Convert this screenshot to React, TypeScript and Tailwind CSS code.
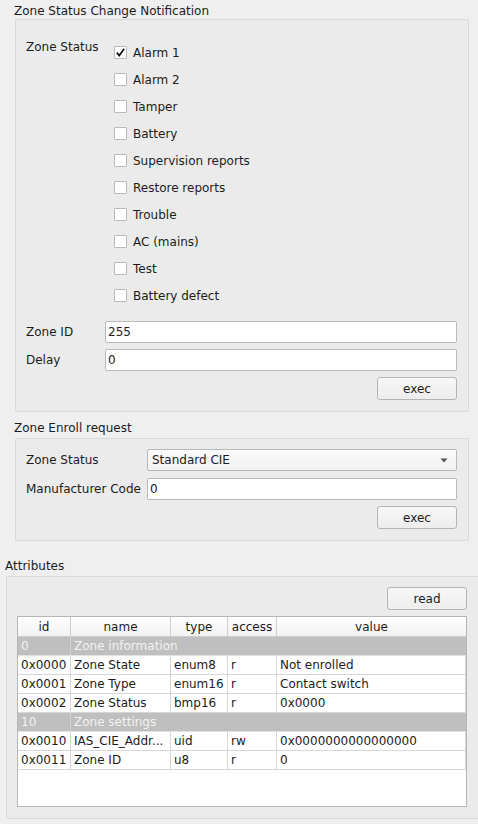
import React from 'react';

const zoneBits = [
  { label: 'Alarm 1', checked: true },
  { label: 'Alarm 2', checked: false },
  { label: 'Tamper', checked: false },
  { label: 'Battery', checked: false },
  { label: 'Supervision reports', checked: false },
  { label: 'Restore reports', checked: false },
  { label: 'Trouble', checked: false },
  { label: 'AC (mains)', checked: false },
  { label: 'Test', checked: false },
  { label: 'Battery defect', checked: false },
];

type Row =
  | { group: true; id: string; title: string }
  | { group?: false; id: string; name: string; type: string; access: string; value: string };

const rows: Row[] = [
  { group: true, id: '0', title: 'Zone information' },
  { id: '0x0000', name: 'Zone State', type: 'enum8', access: 'r', value: 'Not enrolled' },
  { id: '0x0001', name: 'Zone Type', type: 'enum16', access: 'r', value: 'Contact switch' },
  { id: '0x0002', name: 'Zone Status', type: 'bmp16', access: 'r', value: '0x0000' },
  { group: true, id: '10', title: 'Zone settings' },
  { id: '0x0010', name: 'IAS_CIE_Addr...', type: 'uid', access: 'rw', value: '0x0000000000000000' },
  { id: '0x0011', name: 'Zone ID', type: 'u8', access: 'r', value: '0' },
];

const Checkbox: React.FC<{ checked: boolean; label: string }> = ({ checked, label }) => (
  <div className="flex h-[27px] items-center">
    <div className="flex h-[13px] w-[13px] items-center justify-center rounded-[1px] border border-[#b9b9b9] bg-white">
      {checked && (
        <svg width="11" height="11" viewBox="0 0 11 11">
          <path d="M1.8 5.6 L4.2 8.6 L9.2 1.8" fill="none" stroke="#111" strokeWidth="1.7" />
        </svg>
      )}
    </div>
    <span className="ml-[6px] leading-[14px]">{label}</span>
  </div>
);

const TextInput: React.FC<{ value: string }> = ({ value }) => (
  <div className="flex h-[22px] flex-1 items-center rounded-[2px] border border-[#b8b8b8] bg-white pl-[2px] leading-[14px]">
    {value}
  </div>
);

const Button: React.FC<{ label: string }> = ({ label }) => (
  <div className="flex h-[23px] w-[80px] items-center justify-center rounded-[3px] border border-[#b5b5b5] bg-gradient-to-b from-[#f7f7f7] to-[#ededed] leading-[14px]">
    {label}
  </div>
);

const GroupTitle: React.FC<{ title: string; className?: string }> = ({ title, className = '' }) => (
  <div className={`-ml-px h-[14px] leading-[14px] ${className}`}>{title}</div>
);

const colW = ['w-[53px]', 'w-[100px]', 'w-[57px]', 'w-[49px]', 'flex-1'];

export default function App() {
  return (
    <div className="h-[824px] w-[478px] overflow-hidden bg-[#efefef] font-['DejaVu_Sans',sans-serif] text-[12px] text-[#1c1c1c]">
      <div className="pl-[15px] pr-[9px]">
        <GroupTitle title="Zone Status Change Notification" className="mt-[4px] mb-[1px]" />

        {/* Zone status change notification */}
        <div className="h-[393px] rounded-[2px] border border-[#d8d8d8] bg-[#ebebeb] pl-[10px] pr-[11px] pt-[19px]">
          <div className="flex">
            <div className="w-[88px] pt-[1px] leading-[14px]">Zone Status</div>
            <div className="flex flex-col">
              {zoneBits.map((b) => (
                <Checkbox key={b.label} label={b.label} checked={b.checked} />
              ))}
            </div>
          </div>

          <div className="mt-[12px] flex items-center">
            <div className="w-[79px]">Zone ID</div>
            <TextInput value="255" />
          </div>
          <div className="mt-[6px] flex items-center">
            <div className="w-[79px]">Delay</div>
            <TextInput value="0" />
          </div>
          <div className="mt-[6px] flex justify-end">
            <Button label="exec" />
          </div>
        </div>

        <GroupTitle title="Zone Enroll request" className="mt-[9px] mb-[3px]" />

        {/* Zone enroll request */}
        <div className="h-[103px] rounded-[2px] border border-[#d8d8d8] bg-[#ebebeb] pl-[10px] pr-[11px] pt-[10px]">
          <div className="flex items-center">
            <div className="w-[121px]">Zone Status</div>
            <div className="flex h-[22px] flex-1 items-center justify-between rounded-[2px] border border-[#b8b8b8] bg-gradient-to-b from-[#fbfbfb] to-[#f1f1f1] pl-[4px] pr-[8px] leading-[14px]">
              <span>Standard CIE</span>
              <svg width="8" height="5" viewBox="0 0 8 5">
                <path d="M0.5 0.5 L7.5 0.5 L4 4.5 Z" fill="#555" />
              </svg>
            </div>
          </div>
          <div className="mt-[7px] flex items-center">
            <div className="w-[121px]">Manufacturer Code</div>
            <TextInput value="0" />
          </div>
          <div className="mt-[6px] flex justify-end">
            <Button label="exec" />
          </div>
        </div>
      </div>

      <div className="pl-[6px]">
        <GroupTitle title="Attributes" className="mt-[18px] mb-[3px]" />

        {/* Attributes */}
        <div className="h-[243px] w-[480px] rounded-[2px] border border-[#d8d8d8] bg-[#ebebeb] pl-[10px] pt-[10px]">
          <div className="w-[450px]">
            <div className="flex justify-end">
              <Button label="read" />
            </div>

            <div className="mt-[6px] h-[191px] border border-[#b6b6b6] bg-white">
              <div className="flex h-[20px] border-b border-[#cfcfcf] bg-gradient-to-b from-white to-[#f2f2f2]">
                {['id', 'name', 'type', 'access', 'value'].map((h, i) => (
                  <div
                    key={h}
                    className={`${colW[i]} flex items-center justify-center ${i < 4 ? 'border-r border-[#cfcfcf]' : ''}`}
                  >
                    {h}
                  </div>
                ))}
              </div>

              {rows.map((r) =>
                r.group ? (
                  <div key={r.id} className="flex h-[19px] border-b border-[#e2e2e2] bg-[#bfbfbf] text-[#f2f2f2]">
                    <div className="w-[53px] border-r border-[#d2d2d2] pl-[3px] leading-[18px]">{r.id}</div>
                    <div className="flex-1 pl-[3px] leading-[18px]">{r.title}</div>
                  </div>
                ) : (
                  <div key={r.id} className="flex h-[19px] border-b border-[#d6d6d6]">
                    {[r.id, r.name, r.type, r.access, r.value].map((c, i) => (
                      <div
                        key={i}
                        className={`${colW[i]} overflow-hidden whitespace-nowrap border-r border-[#d6d6d6] pl-[3px] leading-[18px]`}
                      >
                        {c}
                      </div>
                    ))}
                  </div>
                ),
              )}
            </div>
          </div>
        </div>
      </div>
    </div>
  );
}
